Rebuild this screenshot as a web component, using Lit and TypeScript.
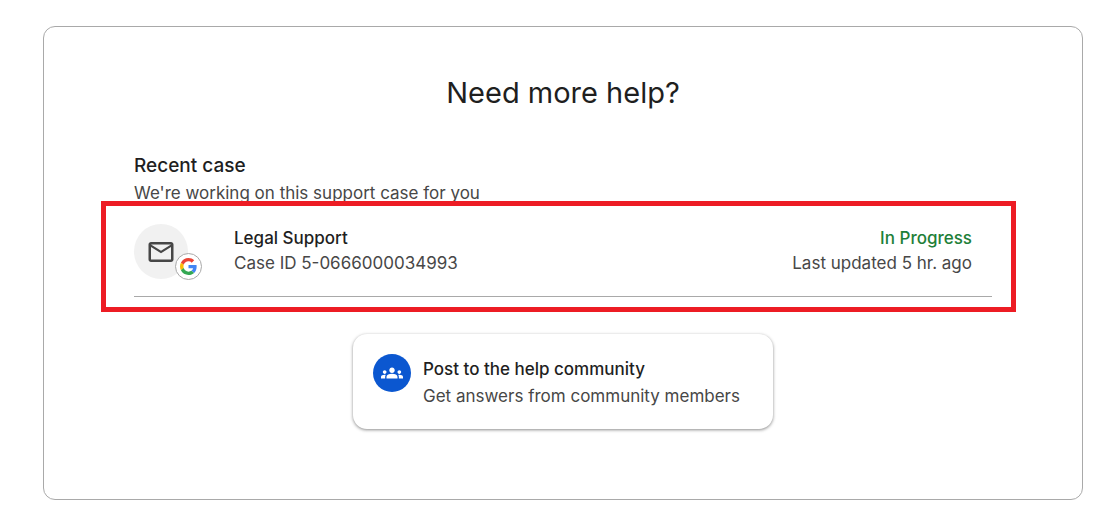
import { LitElement, html, css } from "lit";
import { customElement } from "lit/decorators.js";

@customElement("support-case")
class SupportCase extends LitElement {
  static styles = css`
    :host { display: block; }
    .case {
      position: relative;
      display: flex;
      align-items: flex-start;
      padding: 0 20px 17px 0;
      border-bottom: 1px solid #a9a9a9;
    }
    .avatar {
      position: relative;
      flex: none;
      display: flex;
      align-items: center;
      justify-content: center;
      width: 54px;
      height: 55px;
      border-radius: 50%;
      background: #f1f1f1;
      margin-right: 46px;
    }
    .badge {
      position: absolute;
      right: -14px;
      bottom: -1px;
      box-sizing: border-box;
      width: 27px;
      height: 27px;
      border: 1px solid #a9a9a9;
      border-radius: 50%;
      background: #fff;
      display: flex;
      align-items: center;
      justify-content: center;
    }
    svg { display: block; }
    .info { flex: 1; padding-top: 2px; }
    .status { text-align: right; padding-top: 2px; }
    p { margin: 0; font-size: 17px; line-height: 25px; color: #474747; }
    .name { font-weight: 500; color: #1f1f1f; }
    .progress { font-weight: 500; color: #1e8038; }
    .highlight {
      position: absolute;
      inset: -23px -24px -16px -33px;
      border: 5px solid #ed1c24;
      pointer-events: none;
    }
  `;
  render() {
    return html`
      <div class="case">
        <div class="avatar">
          <svg width="30" height="30" viewBox="0 0 24 24" fill="#474747" aria-hidden="true">
            <path d="M22 6c0-1.100-.9-2-2-2H4c-1.100 0-2 .9-2 2v12c0 1.100.9 2 2 2h16c1.100 0 2-.9 2-2V6zm-2 0l-8 4.990L4 6h16zm0 12H4V8l8 5 8-5v10z" />
          </svg>
          <span class="badge">
            <svg width="17" height="17" viewBox="0 0 48 48" aria-hidden="true">
              <path fill="#EA4335" d="M24 9.500c3.540 0 6.710 1.220 9.210 3.600l6.850-6.850C35.900 2.380 30.470 0 24 0 14.620 0 6.510 5.380 2.560 13.220l7.980 6.190C12.430 13.720 17.740 9.500 24 9.500z" />
              <path fill="#4285F4" d="M46.980 24.550c0-1.570-.15-3.090-.38-4.550H24v9.020h12.940c-.58 2.960-2.260 5.480-4.780 7.180l7.730 6c4.510-4.180 7.090-10.360 7.090-17.650z" />
              <path fill="#FBBC05" d="M10.530 28.590c-.48-1.450-.76-2.990-.76-4.590s.27-3.140.76-4.590l-7.980-6.190C.92 16.460 0 20.120 0 24c0 3.880.92 7.540 2.560 10.780l7.970-6.190z" />
              <path fill="#34A853" d="M24 48c6.480 0 11.930-2.130 15.890-5.810l-7.730-6c-2.150 1.450-4.920 2.300-8.160 2.300-6.260 0-11.570-4.220-13.470-9.910l-7.980 6.190C6.510 42.620 14.620 48 24 48z" />
            </svg>
          </span>
        </div>
        <div class="info">
          <p class="name">Legal Support</p>
          <p>Case ID 5-0666000034993</p>
        </div>
        <div class="status">
          <p class="progress">In Progress</p>
          <p>Last updated 5 hr. ago</p>
        </div>
        <div class="highlight"></div>
      </div>
    `;
  }
}

@customElement("app-root")
class AppRoot extends LitElement {
  static styles = css`
    :host {
      display: block;
      padding: 26px 30px 29px 43px;
      background: #fff;
      font-family: Inter, "Open Sans", sans-serif;
      color: #1f1f1f;
    }
    .panel {
      display: flex;
      flex-direction: column;
      padding: 46px 90px 70px;
      border: 1px solid #a9a9a9;
      border-radius: 12px;
    }
    h1 {
      margin: 0 0 39px;
      font-size: 29px;
      font-weight: 400;
      line-height: 40px;
      text-align: center;
    }
    h2 { margin: 0 0 1px; font-size: 19px; font-weight: 500; line-height: 28px; }
    .lead { margin: 0 0 18px; font-size: 17px; line-height: 25px; color: #474747; }
    .community {
      display: flex;
      align-items: flex-start;
      gap: 12px;
      align-self: center;
      box-sizing: border-box;
      width: 420px;
      max-width: 100%;
      margin-top: 37px;
      padding: 20px 20px 19px;
      border: 0;
      border-radius: 14px;
      background: #fff;
      box-shadow: 0 1px 3px rgba(0, 0, 0, 0.36), 0 1px 4px rgba(0, 0, 0, 0.12);
      font: inherit;
      text-align: left;
      cursor: pointer;
    }
    .icon {
      flex: none;
      display: flex;
      align-items: center;
      justify-content: center;
      width: 38px;
      height: 38px;
      border-radius: 50%;
      background: #0b57d0;
    }
    .text { display: flex; flex-direction: column; padding-top: 2px; font-size: 17px; line-height: 27px; white-space: nowrap; }
    .title { font-weight: 500; color: #1f1f1f; }
    .detail { color: #474747; }
  `;
  render() {
    return html`
      <main class="panel">
        <h1>Need more help?</h1>
        <h2>Recent case</h2>
        <p class="lead">We're working on this support case for you</p>
        <support-case></support-case>
        <button class="community" type="button">
          <span class="icon">
            <svg width="22" height="22" viewBox="0 0 24 24" fill="#fff" aria-hidden="true">
              <path d="M12 12.750c1.630 0 3.070.39 4.240.9 1.080.48 1.760 1.560 1.760 2.730V18H6v-1.610c0-1.180.68-2.260 1.760-2.730 1.170-.52 2.610-.91 4.240-.91zM4 13c1.100 0 2-.9 2-2s-.9-2-2-2-2 .9-2 2 .9 2 2 2zm1.130 1.100c-.37-.06-.74-.1-1.130-.1-.99 0-1.930.21-2.780.58C.48 14.900 0 15.620 0 16.430V18h4.500v-1.610c0-.83.23-1.610.63-2.290zM20 13c1.100 0 2-.9 2-2s-.9-2-2-2-2 .9-2 2 .9 2 2 2zm4 3.430c0-.81-.48-1.530-1.220-1.850-.85-.37-1.790-.58-2.780-.58-.39 0-.76.04-1.130.1.4.68.63 1.460.63 2.290V18H24v-1.570zM12 6c1.660 0 3 1.340 3 3s-1.340 3-3 3-3-1.340-3-3 1.340-3 3-3z" />
            </svg>
          </span>
          <span class="text">
            <span class="title">Post to the help community</span>
            <span class="detail">Get answers from community members</span>
          </span>
        </button>
      </main>
    `;
  }
}
